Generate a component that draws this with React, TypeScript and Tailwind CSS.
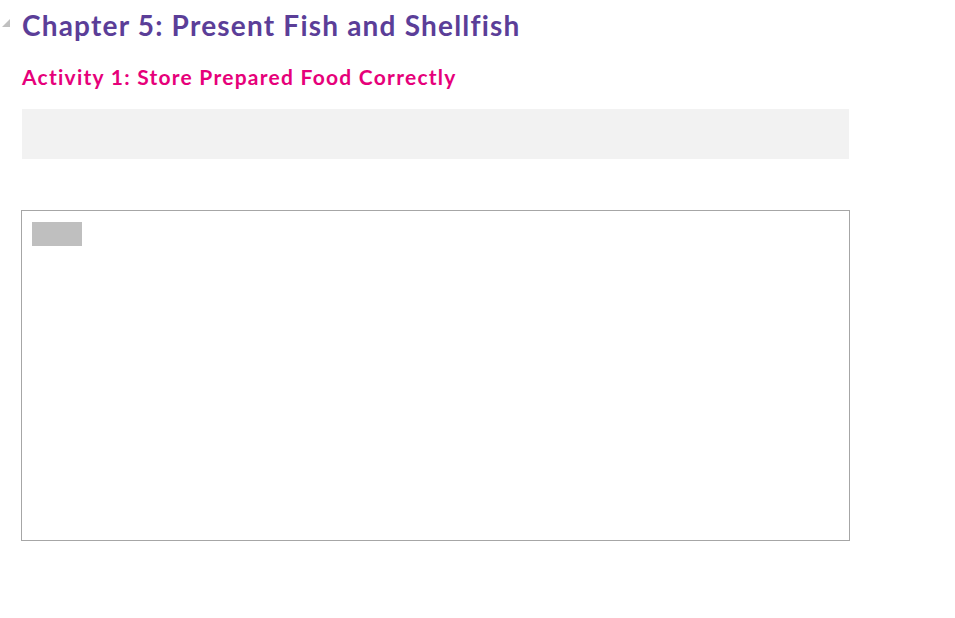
import React from 'react';

export default function App() {
  return (
    <div className="min-h-screen w-full bg-white font-['Lato','Open_Sans',sans-serif]">
      <div className="relative pl-[22px] pt-[7px]">
        <svg className="absolute left-[2px] top-[19px]" width="9" height="9" viewBox="0 0 9 9">
          <polygon points="8,0 8,8 0,8" fill="#c0c0c0" />
        </svg>
        <h1 className="text-[28px] font-bold leading-[36px] tracking-[1.2px] text-[#5b3e98]">
          Chapter 5: Present Fish and Shellfish
        </h1>
        <h2 className="mt-[20px] text-[21px] font-bold leading-[28px] tracking-[1.25px] text-[#e6007a]">
          Activity 1: Store Prepared Food Correctly
        </h2>
        <div className="mt-[18px] h-[50px] w-[827px] bg-[#f2f2f2]" />
        <div className="-ml-[1px] mt-[51px] h-[331px] w-[829px] border border-[#a6a6a6] p-[11px]">
          <div className="-ml-[1px] h-[24px] w-[50px] bg-[#bfbfbf]" />
        </div>
      </div>
    </div>
  );
}
